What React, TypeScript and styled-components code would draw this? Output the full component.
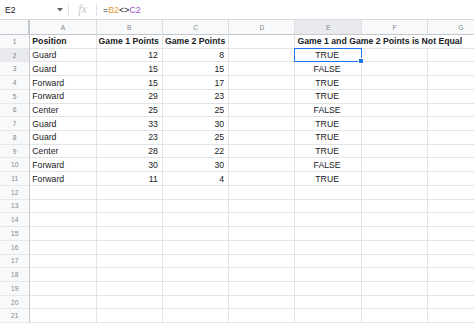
import {FC} from "react";
import styled, {createGlobalStyle} from "styled-components";

const COL_W = 66.3;
const ROW_H = 13.73;
const HEAD_W = 30.3;
const HEAD_H = 15;
const COLS = ["A", "B", "C", "D", "E", "F", "G"];
const ROW_COUNT = 21;

type Row = [string, number, number, string];

const rows: Row[] = [
    ["Guard", 12, 8, "TRUE"],
    ["Guard", 15, 15, "FALSE"],
    ["Forward", 15, 17, "TRUE"],
    ["Forward", 29, 23, "TRUE"],
    ["Center", 25, 25, "FALSE"],
    ["Guard", 33, 30, "TRUE"],
    ["Guard", 23, 25, "TRUE"],
    ["Center", 28, 22, "TRUE"],
    ["Forward", 30, 30, "FALSE"],
    ["Forward", 11, 4, "TRUE"],
];

const GlobalStyle = createGlobalStyle`
  html, body {
    margin: 0;
    padding: 0;
    background: #fff;
    overflow: hidden;
  }
  body {
    font-family: "Liberation Sans", Arial, sans-serif;
  }
`

const Page = styled.div`
  width: 474px;
  height: 323px;
  overflow: hidden;
  background: #fff;
`

const FormulaBar = styled.div`
  display: flex;
  align-items: center;
  height: 19px;
  border-bottom: 1px solid #d6d8db;
  font-size: 8.7px;
  color: #202124;
`

const NameBox = styled.div`
  width: 68px;
  box-sizing: border-box;
  display: flex;
  align-items: center;
  justify-content: space-between;
  padding: 0 5px 0 5px;
`

const Divider = styled.div`
  width: 1px;
  height: 12px;
  background: #e0e2e5;
`

const FxBox = styled.div`
  width: 27px;
  text-align: center;
  font-family: "Liberation Serif", "Times New Roman", serif;
  font-style: italic;
  font-size: 12px;
  color: #c4c6c9;
  line-height: 19px;
`

const Formula = styled.div`
  padding-left: 6px;
  letter-spacing: 0.1px;
`

const Ref = styled.span<{ $color: string }>`
  color: ${p => p.$color};
`

const Grid = styled.div`
  display: grid;
  grid-template-columns: ${HEAD_W}px repeat(${COLS.length}, ${COL_W}px);
  grid-template-rows: ${HEAD_H}px repeat(${ROW_COUNT}, ${ROW_H}px);
`

const Corner = styled.div`
  background: #f8f9fa;
  border-right: 2px solid #c4c7cb;
  border-bottom: 1px solid #c4c7cb;
  box-sizing: border-box;
`

const ColHead = styled.div<{ $active?: boolean }>`
  background: ${p => p.$active ? "#e8eaed" : "#f8f9fa"};
  border-right: 1px solid #dcdee1;
  border-bottom: 1px solid #c4c7cb;
  box-sizing: border-box;
  display: flex;
  align-items: center;
  justify-content: center;
  font-size: 6.6px;
  color: #80868b;
`

const RowHead = styled.div<{ $active?: boolean }>`
  background: ${p => p.$active ? "#e8eaed" : "#f8f9fa"};
  border-right: 1px solid #c4c7cb;
  border-bottom: 1px solid #e6e7e9;
  box-sizing: border-box;
  display: flex;
  align-items: center;
  justify-content: center;
  font-size: 6.6px;
  color: #80868b;
`

const Cell = styled.div<{ $align?: "left" | "right" | "center"; $bold?: boolean; $span?: number; $selected?: boolean }>`
  position: relative;
  grid-column: ${p => p.$span ? `span ${p.$span}` : "auto"};
  border-right: 1px solid #e2e3e5;
  border-bottom: 1px solid #e2e3e5;
  box-sizing: border-box;
  display: flex;
  align-items: center;
  justify-content: ${p => p.$align === "right" ? "flex-end" : p.$align === "center" ? "center" : "flex-start"};
  padding: 0 4px 0 2px;
  font-size: 8.7px;
  font-weight: ${p => p.$bold ? 700 : 400};
  color: #202124;
  white-space: nowrap;

  ${p => p.$selected && `
    &::before {
      content: "";
      position: absolute;
      inset: -1px -1px -1px -1px;
      border: 1.5px solid #1a73e8;
      pointer-events: none;
    }
    &::after {
      content: "";
      position: absolute;
      right: -3px;
      bottom: -3px;
      width: 4px;
      height: 4px;
      background: #1a73e8;
      border: 1px solid #fff;
      z-index: 1;
    }
  `}
`

const Caret: FC = () => (
    <svg width="6" height="4" viewBox="0 0 6 4">
        <path d="M0 0 L6 0 L3 3.5 Z" fill="#5f6368"/>
    </svg>
);

export default function App() {
    const cells = [];

    for (let r = 1; r <= ROW_COUNT; r++) {
        cells.push(<RowHead key={`h${r}`} $active={r === 2}>{r}</RowHead>);

        if (r === 1) {
            cells.push(<Cell key="a1" $bold>Position</Cell>);
            cells.push(<Cell key="b1" $bold>Game 1 Points</Cell>);
            cells.push(<Cell key="c1" $bold>Game 2 Points</Cell>);
            cells.push(<Cell key="d1"/>);
            cells.push(<Cell key="e1" $bold $span={3}>Game 1 and Game 2 Points is Not Equal</Cell>);
            continue;
        }

        const row = rows[r - 2];
        if (row) {
            const [pos, g1, g2, result] = row;
            cells.push(<Cell key={`a${r}`}>{pos}</Cell>);
            cells.push(<Cell key={`b${r}`} $align="right">{g1}</Cell>);
            cells.push(<Cell key={`c${r}`} $align="right">{g2}</Cell>);
            cells.push(<Cell key={`d${r}`}/>);
            cells.push(<Cell key={`e${r}`} $align="center" $selected={r === 2}>{result}</Cell>);
            cells.push(<Cell key={`f${r}`}/>);
            cells.push(<Cell key={`g${r}`}/>);
        } else {
            COLS.forEach(c => cells.push(<Cell key={`${c}${r}`}/>));
        }
    }

    return (
        <Page>
            <GlobalStyle/>
            <FormulaBar>
                <NameBox>
                    <span>E2</span>
                    <Caret/>
                </NameBox>
                <Divider/>
                <FxBox>fx</FxBox>
                <Divider/>
                <Formula>
                    =<Ref $color="#e69a28">B2</Ref>&lt;&gt;<Ref $color="#9c4fc4">C2</Ref>
                </Formula>
            </FormulaBar>
            <Grid>
                <Corner/>
                {COLS.map(c => (
                    <ColHead key={c} $active={c === "E"}>{c}</ColHead>
                ))}
                {cells}
            </Grid>
        </Page>
    );
}
